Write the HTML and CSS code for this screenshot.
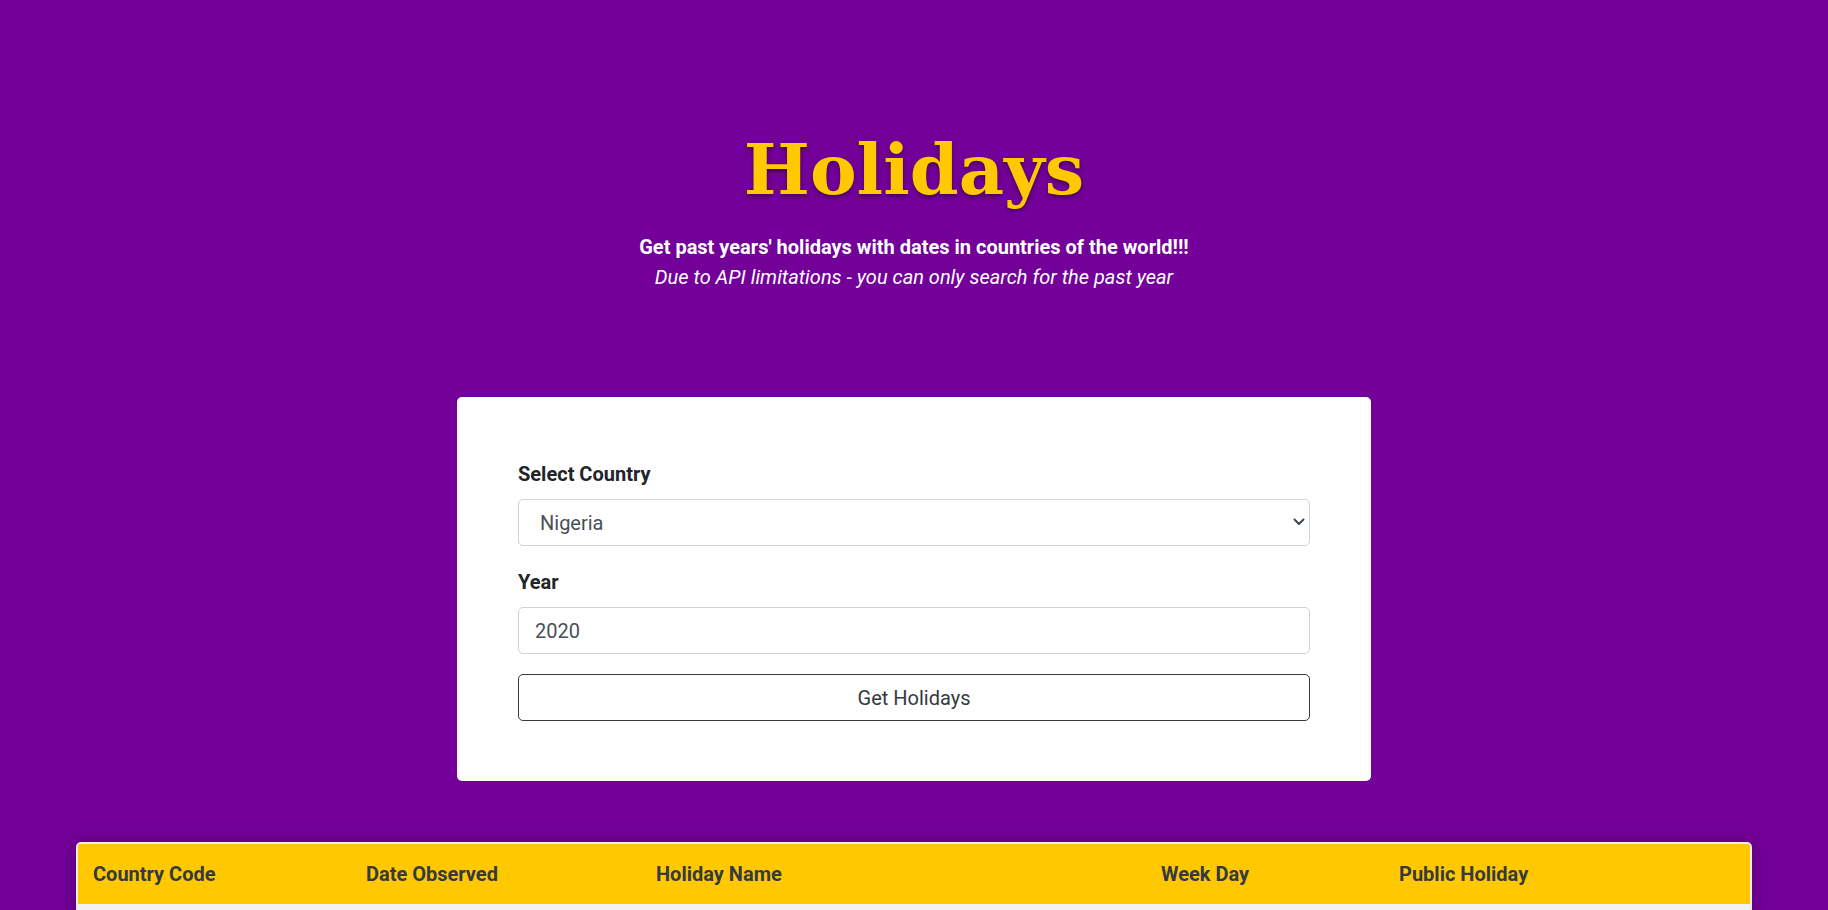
FILE: index.html
```html
<!DOCTYPE html>
<html lang="en">
<head>
<meta charset="utf-8">
<title>Holidays</title>
<link rel="stylesheet" href="styles.css">
</head>
<body>
<header class="hero">
  <h1 class="title">Holidays</h1>
  <p class="tagline">Get past years' holidays with dates in countries of the world!!!</p>
  <p class="note">Due to API limitations - you can only search for the past year</p>
</header>

<main>
  <section class="card">
    <form class="search-form">
      <label class="field-label" for="country">Select Country</label>
      <div class="select-wrap">
        <select class="control control-select" id="country">
          <option>Nigeria</option>
          <option>Ghana</option>
          <option>Kenya</option>
        </select>
        <svg class="select-arrow" width="12" height="8" viewBox="0 0 12 8" aria-hidden="true">
          <path d="M1.5 1.5 L6 6 L10.5 1.5" fill="none" stroke="#40464d" stroke-width="2" stroke-linecap="round" stroke-linejoin="round"/>
        </svg>
      </div>
      <label class="field-label" for="year">Year</label>
      <input class="control" id="year" type="text" value="2020">
      <button class="submit-btn" type="button">Get Holidays</button>
    </form>
  </section>

  <section class="results">
    <table class="holiday-table">
      <thead>
        <tr>
          <th class="col-code">Country Code</th>
          <th class="col-date">Date Observed</th>
          <th class="col-name">Holiday Name</th>
          <th class="col-day">Week Day</th>
          <th class="col-public">Public Holiday</th>
        </tr>
      </thead>
      <tbody>
        <tr><td>NG</td><td>2020-01-01</td><td>New Year's Day</td><td>Wednesday</td><td>Yes</td></tr>
        <tr><td>NG</td><td>2020-04-10</td><td>Good Friday</td><td>Friday</td><td>Yes</td></tr>
      </tbody>
    </table>
  </section>
</main>
</body>
</html>
```
FILE: styles.css
```css
* { box-sizing: border-box; }

body {
  margin: 0;
  background: #730099;
  font-family: Roboto, "Liberation Sans", Arial, sans-serif;
  color: #212529;
  font-size: 16px;
  line-height: 1.5;
}

.hero {
  padding-top: 128px;
  text-align: center;
  color: #fff;
}

.title {
  margin: 0 0 20px;
  font-family: "DejaVu Serif", "Liberation Serif", serif;
  font-weight: 700;
  font-size: 70px;
  line-height: 84px;
  color: #ffc800;
  text-shadow: 0 2px 4px rgba(40, 0, 50, 0.7);
}

.tagline {
  margin: 0;
  font-weight: 700;
  font-size: 20px;
  line-height: 30px;
}

.note {
  margin: 0;
  font-style: italic;
  font-size: 20px;
  line-height: 30px;
}

.card {
  width: 914px;
  margin: 105px auto 0;
  background: #fff;
  border-radius: 5px;
  padding: 62px 61px 60px;
}

.search-form {
  display: flex;
  flex-direction: column;
}

.field-label {
  font-weight: 700;
  font-size: 20px;
  line-height: 30px;
  margin-bottom: 10px;
  color: #212529;
}

.select-wrap {
  position: relative;
  margin-bottom: 21px;
}

.control {
  height: 47px;
  width: 100%;
  padding: 8px 16px;
  font-family: inherit;
  font-size: 20px;
  line-height: 30px;
  color: #495057;
  background: #fff;
  border: 1px solid #ced4da;
  border-radius: 5px;
  margin-bottom: 20px;
}

.control-select {
  appearance: none;
  -webkit-appearance: none;
  padding-left: 21px;
  margin-bottom: 0;
}

.select-arrow {
  position: absolute;
  right: 5px;
  top: 19px;
}

.submit-btn {
  height: 47px;
  width: 100%;
  font-family: inherit;
  font-size: 20px;
  color: #343a40;
  background: #fff;
  border: 1px solid #343a40;
  border-radius: 5px;
}

.results {
  margin: 61px 76px 0;
  border: 2px solid #ececec;
  border-radius: 5px;
  overflow: hidden;
  box-shadow: 0 0 16px rgba(20, 0, 30, 0.35);
}

.holiday-table {
  width: 100%;
  border-collapse: collapse;
  table-layout: fixed;
  background: #fff;
}

.holiday-table th {
  background: #ffc800;
  text-align: left;
  font-weight: 700;
  font-size: 20px;
  line-height: 30px;
  padding: 15px 15px 15px 15px;
  color: #343a40;
}

.holiday-table td {
  padding: 15px;
  font-size: 18px;
  color: #212529;
}

.holiday-table tbody tr:nth-child(odd) td {
  background: #f2f2f2;
}

.col-code { width: 273px; }
.col-date { width: 290px; }
.col-name { width: 505px; }
.col-day { width: 238px; }
.col-public { width: auto; }
```
